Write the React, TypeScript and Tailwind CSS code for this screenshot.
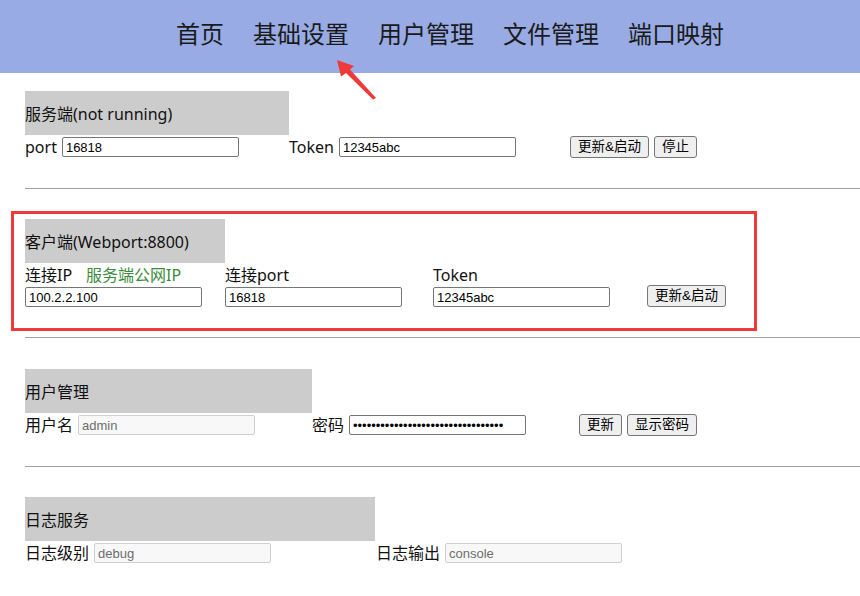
const font = { fontFamily: '"Liberation Sans", "Noto Sans CJK SC", Arial, sans-serif' }
const labelFont = { fontFamily: '"Noto Sans", "Noto Sans CJK SC", sans-serif' }

function Field({ value, disabled, type = 'text' }: { value: string; disabled?: boolean; type?: string }) {
  return (
    <input
      type={type}
      defaultValue={value}
      disabled={disabled}
      className={
        disabled
          ? 'w-[177px] h-[20px] px-[3px] text-[13px] border border-[#d0d0d0] rounded-[2px] bg-[#f8f8f8] text-[#6d6d6d]'
          : 'w-[177px] h-[20px] px-[3px] text-[13px] border border-[#767676] rounded-[2px] bg-white text-black'
      }
      style={font}
    />
  )
}

function Btn({ children }: { children: string }) {
  return (
    <button
      className="h-[22px] px-[7px] text-[13.5px] border border-[#767676] rounded-[3px] bg-[#efefef] text-black leading-none"
      style={font}
    >
      {children}
    </button>
  )
}

function Title({ width, children }: { width: string; children: React.ReactNode }) {
  return (
    <div className={`${width} h-[44px] bg-[#cccccc] flex items-center pt-[2px] text-[16px] text-[#111]`} style={labelFont}>
      {children}
    </div>
  )
}

const Rule = () => <div className="ml-[25px] border-t border-[#a0a0a0]" />

export default function App() {
  return (
    <div className="relative w-[860px] h-[596px] bg-white text-[#111] overflow-hidden" style={font}>
      <nav className="h-[73px] bg-[#98abe4] flex items-center pl-[176px] pb-[4px] gap-[29px] text-[24px] text-[#1a1a1a]">
        <span>首页</span>
        <span>基础设置</span>
        <span>用户管理</span>
        <span>文件管理</span>
        <span>端口映射</span>
      </nav>

      {/* 服务端 */}
      <div className="pl-[25px] pt-[18px] h-[115px]" style={labelFont}>
        <Title width="w-[264px]">服务端(not running)</Title>
        <div className="flex items-center mt-px text-[16px] h-[22px]">
          <div className="w-[264px] flex items-center gap-[5px]">
            <span>port</span>
            <Field value="16818" />
          </div>
          <div className="w-[281px] flex items-center gap-[5px]">
            <span>Token</span>
            <Field value="12345abc" />
          </div>
          <div className="flex gap-[5px]">
            <Btn>更新&启动</Btn>
            <Btn>停止</Btn>
          </div>
        </div>
      </div>
      <Rule />

      {/* 客户端 */}
      <div className="pl-[25px] pt-[30px] h-[148px]" style={labelFont}>
        <Title width="w-[200px]">客户端(Webport:8800)</Title>
        <div className="flex items-end text-[16px]">
          <div className="w-[200px] flex flex-col">
            <div className="h-[24px] flex items-center">
              连接IP<span className="ml-[14px] text-[#3a8a3a]">服务端公网IP</span>
            </div>
            <Field value="100.2.2.100" />
          </div>
          <div className="w-[208px] flex flex-col">
            <div className="h-[24px] flex items-center">连接port</div>
            <Field value="16818" />
          </div>
          <div className="w-[214px] flex flex-col">
            <div className="h-[24px] flex items-center">Token</div>
            <Field value="12345abc" />
          </div>
          <Btn>更新&启动</Btn>
        </div>
      </div>
      <Rule />

      {/* 用户管理 */}
      <div className="pl-[25px] pt-[31px] h-[128px]" style={labelFont}>
        <Title width="w-[287px]">用户管理</Title>
        <div className="flex items-center mt-px text-[16px] h-[22px]">
          <div className="w-[287px] flex items-center gap-[5px]">
            <span>用户名</span>
            <Field value="admin" disabled />
          </div>
          <div className="w-[267px] flex items-center gap-[5px]">
            <span>密码</span>
            <Field value="admin123admin123admin123admin123a" type="password" />
          </div>
          <div className="flex gap-[5px]">
            <Btn>更新</Btn>
            <Btn>显示密码</Btn>
          </div>
        </div>
      </div>
      <Rule />

      {/* 日志服务 */}
      <div className="pl-[25px] pt-[30px]" style={labelFont}>
        <Title width="w-[350px]">日志服务</Title>
        <div className="flex items-center text-[16px] h-[24px]">
          <div className="w-[351px] flex items-center gap-[5px]">
            <span>日志级别</span>
            <Field value="debug" disabled />
          </div>
          <div className="flex items-center gap-[5px]">
            <span>日志输出</span>
            <Field value="console" disabled />
          </div>
        </div>
      </div>

      {/* annotations */}
      <div className="absolute left-[11px] top-[211px] w-[746px] h-[120px] border-[3px] border-[#f03a3a] pointer-events-none" />
      <svg className="absolute left-0 top-0 pointer-events-none" width="860" height="120">
        <path d="M337 60 L354 66 L350 69.5 L376 98 L373 99.5 L346 73 L341 76.5 Z" fill="#f03a3a" />
      </svg>
    </div>
  )
}
